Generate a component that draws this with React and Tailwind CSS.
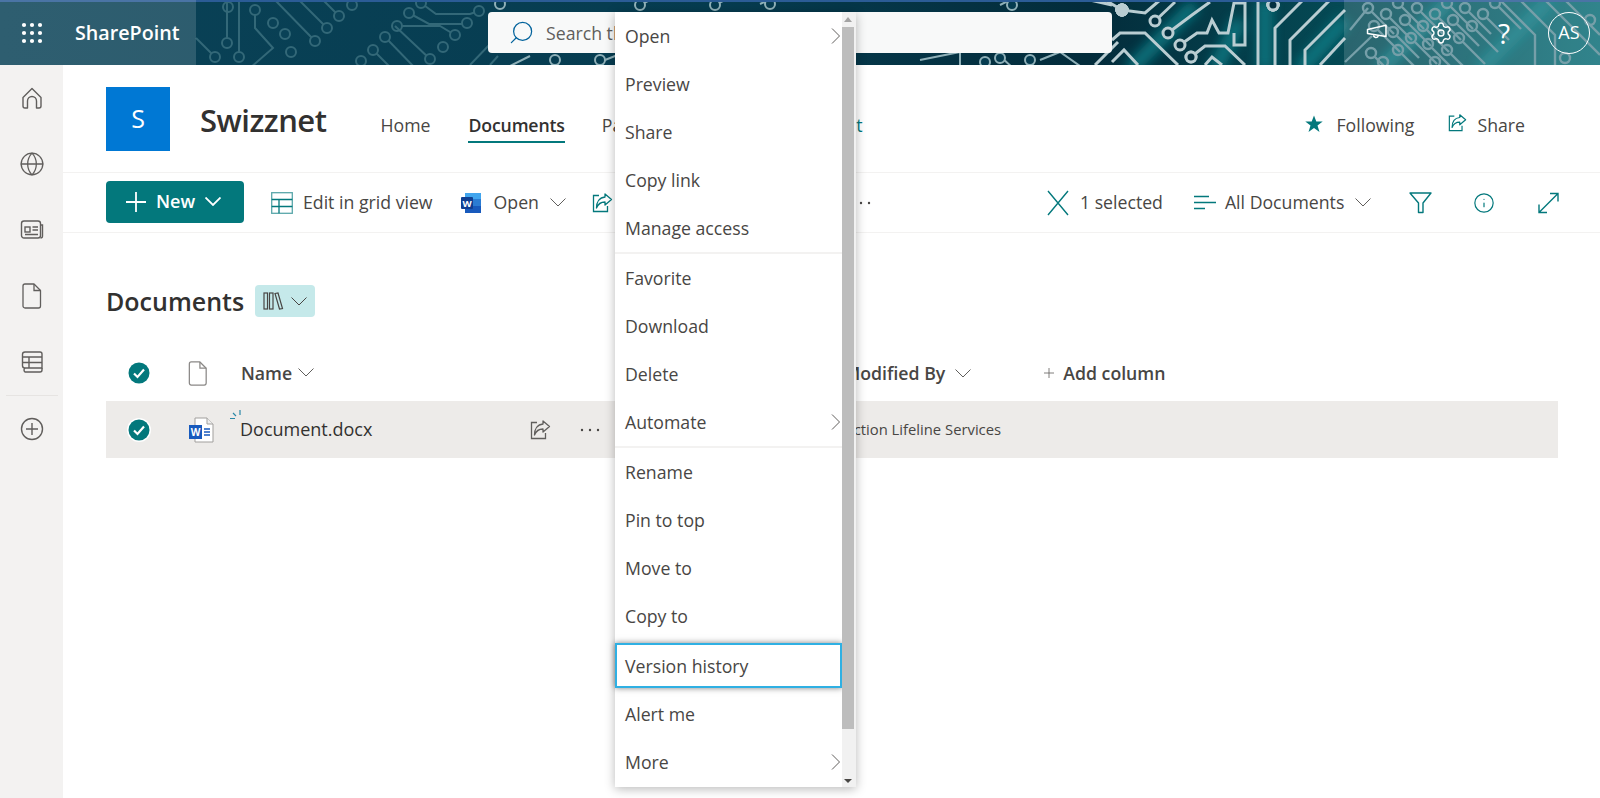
import React from 'react';
import { Globe, Info, Settings, Search } from 'lucide-react';

const FONT = 'font-["Open_Sans","Noto_Sans",sans-serif]';

// circuit traces of the banner, [path, circle x, circle y]
const dimTraces = [
  ['M228 7V0', 228, 7], ['M227 43V0', 227, 43], ['M215 57L196 38', 215, 57], ['M239 57V0', 239, 57],
  ['M255 10V28L273 48L250 68', 255, 10], ['M273 23', 273, 23], ['M285 34', 285, 34], ['M291 52', 291, 52],
  ['M315 41L275 0', 315, 41], ['M327 28L299 0', 327, 28], ['M339 16L323 0', 339, 16], ['M352 5', 352, 5],
  ['M361 61', 361, 61], ['M373 50L393 70', 373, 50], ['M385 37L417 70', 385, 37], ['M397 26L410 26L440 26L455 35', 397, 26],
  ['M409 13L429 24H462L467 23', 409, 13], ['M421 3L436 14H470L479 11', 421, 3], ['M430 59L395 26', 430, 59],
  ['M443 47', 443, 47], ['M455 35', 455, 35], ['M467 23', 467, 23], ['M479 11', 479, 11],
  ['M470 65L492 42', 468, 80], ['M490 65L498 56', 490, 80],
];

const midTraces = [
  ['M500 3L520 -3', 500, 4], ['M600 62L620 54H660', 600, 60], ['M715 5L735 -5', 715, 5], ['M760 4L790 -10', 770, 4],
  ['M530 56L510 66', 555, 60], ['M640 5L660 -5', 640, 5], ['M920 60L960 52V70', 985, 62],
  ['M1000 5L1020 -5', 1012, 5], ['M1040 60L1060 52L1080 66', 1030, 60], ['M1000 56L1015 70', 1000, 58],
];

const brightTraces = [
  ['M1122 10L1145 13L1160 0', 1122, 10], ['M1122 10L1105 0', 1122, 10], ['M1155 21L1175 2', 1155, 21],
  ['M1168 33L1192 15L1210 2', 1168, 33], ['M1180 45L1197 33H1207L1212 20L1219 33L1228 33L1234 3H1245V45H1234V33', 1180, 45],
  ['M1191 57L1205 46H1225L1245 65', 1191, 57], ['M1258 0V65', 1273, 5], ['M1275 65V28L1303 0', 1273, 5],
  ['M1290 65V40L1330 0', 1273, 5], ['M1305 65V50L1345 10', 1273, 5], ['M1320 65L1345 38', 1273, 5],
  ['M1112 40L1120 33H1145L1178 65', 1122, 10], ['M1112 62L1124 50L1138 65', 1122, 10],
  ['M1205 65L1212 57L1222 65', 1191, 57], ['M1095 65L1118 42', 1122, 10],
  ['M1112 5L1090 0', 1122, 10], ['M1092 22L1112 40', 1122, 10],
];

const overlayCircles = [
  [1368, 8], [1386, 14], [1398, 3], [1417, 8], [1435, 14], [1447, 3], [1465, 8], [1483, 14], [1495, 3],
  [1374, 26], [1393, 32], [1405, 20], [1423, 26], [1453, 20], [1472, 26], [1411, 38], [1428, 44], [1459, 38],
  [1398, 50], [1447, 50], [1371, 53], [1435, 62], [1383, 62],
];

const Banner = () => (
  <svg className="absolute inset-0" width="1600" height="65" viewBox="0 0 1600 65">
    <defs>
      <linearGradient id="bannerBase" x1="0" x2="1" y1="0" y2="0">
        <stop offset="0" stopColor="#0a4257" />
        <stop offset="0.45" stopColor="#063c50" />
        <stop offset="0.68" stopColor="#032c3b" />
        <stop offset="0.84" stopColor="#054a55" />
        <stop offset="1" stopColor="#0d6f78" />
      </linearGradient>
      <filter id="bannerBlur"><feGaussianBlur stdDeviation="6" /></filter>
    </defs>
    <rect width="1600" height="65" fill="url(#bannerBase)" />
    <g filter="url(#bannerBlur)" stroke="#0d7f88" strokeWidth="14" fill="none" opacity="0.85">
      <path d="M1130 70L1195 5" />
      <path d="M1215 70L1240 20" />
      <path d="M1265 70V0" />
      <path d="M1300 70L1345 20" />
      <path d="M1380 70L1450 0" />
      <path d="M1480 70L1550 0" />
    </g>
    <g fill="none" stroke="#336878" strokeWidth="2">
      {dimTraces.map(([d, x, y], i) => (
        <g key={i}>
          <path d={d} />
          <circle cx={x} cy={y} r="5" fill="#0a4257" />
        </g>
      ))}
    </g>
    <g fill="none" stroke="#8fb0b8" strokeWidth="2">
      {midTraces.map(([d, x, y], i) => (
        <g key={i}>
          <path d={d} />
          <circle cx={x} cy={y} r="5" fill="#063c50" />
        </g>
      ))}
    </g>
    <g fill="none" stroke="#b9cdd2" strokeWidth="3">
      {brightTraces.map(([d, x, y], i) => (
        <g key={i}>
          <path d={d} />
          <circle cx={x} cy={y} r="5" fill="#03303f" />
        </g>
      ))}
      <circle cx="1122" cy="10" r="5" fill="#b9cdd2" />
    </g>
    <g fill="none" stroke="#5f8f9a" strokeWidth="2.4">
      {overlayCircles.map(([x, y], i) => (
        <g key={i}>
          <path d={`M${x + 4} ${y + 4}L${x + 26} ${y + 26}`} />
          <circle cx={x} cy={y} r="5" />
        </g>
      ))}
      <path d="M1500 0L1535 35V65" />
      <path d="M1520 0L1555 35V65" />
      <path d="M1545 0L1600 55" />
      <path d="M1565 0L1600 35" />
      <path d="M1350 30L1368 8" />
      <path d="M1345 62L1372 36" />
      <circle cx="1565" cy="58" r="5" />
      <circle cx="1590" cy="20" r="5" />
    </g>
    <rect width="1600" height="2" fill="#2b5c96" />
  </svg>
);

const Waffle = () => (
  <svg width="22" height="22" viewBox="0 0 22 22" fill="#fff">
    {[3, 11, 19].map((y) => [3, 11, 19].map((x) => <circle key={`${x}-${y}`} cx={x} cy={y} r="2.1" />))}
  </svg>
);

const Chev = ({ className = '', color = '#605e5c', width = 1 }) => (
  <svg className={className} width="16" height="9" viewBox="0 0 16 9" fill="none" stroke={color} strokeWidth={width}>
    <path d="M0.500 0.500L8 8L15.500 0.500" />
  </svg>
);

const ThinPlus = ({ size = 20, width = 1.8, color = '#fff' }) => (
  <svg width={size} height={size} viewBox="0 0 20 20" stroke={color} strokeWidth={width}>
    <path d="M10 0V20M0 10H20" />
  </svg>
);

const ShareIcon = ({ className = 'text-[#03787c]', size = 21 }) => (
  <svg className={className} width={size} height={size} viewBox="0 0 21 21" fill="none" stroke="currentColor" strokeWidth="1.3">
    <path d="M7 3.5H1.5V19.5H15.5V14" />
    <path d="M13 2L19.5 7.5L13 13V10C8.5 10 6 12 4.5 16C4.5 10 7.5 5.5 13 5Z" strokeLinejoin="round" />
  </svg>
);

const HomeIcon = () => (
  <svg width="24" height="26" viewBox="0 0 24 24" fill="none" stroke="#605e5c" strokeWidth="1.4">
    <path d="M3 11.5L12 2.5L21 11.5V20A2 2 0 0 1 19 22H16.5V15A4.5 4.5 0 0 0 7.500 15V22H5A2 2 0 0 1 3 20Z" strokeLinejoin="round" />
  </svg>
);

const NewsIcon = () => (
  <svg width="24" height="24" viewBox="0 0 24 24" fill="none" stroke="#605e5c" strokeWidth="1.4">
    <rect x="1.500" y="4" width="19" height="17" rx="2.5" />
    <path d="M20.500 8H22.500V19A2 2 0 0 1 20.500 21" />
    <rect x="5" y="10" width="5" height="5" />
    <path d="M12.500 10H18M12.500 13H18M5 17.500H18" />
  </svg>
);

const FileIcon = ({ color = '#605e5c', w = 22, h = 26 }) => (
  <svg width={w} height={h} viewBox="0 0 20 26" fill="none" stroke={color} strokeWidth="1.3">
    <path d="M3 1H12L18.500 7.500V23A2 2 0 0 1 16.500 25H3A2 2 0 0 1 1 23V3A2 2 0 0 1 3 1Z" strokeLinejoin="round" />
    <path d="M12 1V7.500H18.500" />
  </svg>
);

const ListsIcon = () => (
  <svg width="24" height="24" viewBox="0 0 24 24" fill="none" stroke="#605e5c" strokeWidth="1.4">
    <path d="M5 2H20A2 2 0 0 1 22 4V18H5A2.500 2.500 0 0 1 2.500 15.500V4.500A2.500 2.500 0 0 1 5 2Z" />
    <path d="M2.500 7H22M2.500 12.500H22M9 7V18M5 18A2.500 2.500 0 0 0 5 22H20A2 2 0 0 0 22 20V18" />
  </svg>
);

const PlusCircle = () => (
  <svg width="24" height="24" viewBox="0 0 24 24" fill="none" stroke="#605e5c" strokeWidth="1.4">
    <circle cx="12" cy="12" r="10.500" />
    <path d="M12 6V18M6 12H18" />
  </svg>
);

const GridIcon = () => (
  <svg width="22" height="22" viewBox="0 0 22 22" fill="none" stroke="#03787c" strokeWidth="1.3">
    <rect x="0.700" y="0.700" width="20.600" height="20.600" stroke="#5aa7aa" />
    <path d="M0.700 7.500H21.300M0.700 14.500H21.300M8 7.500V21.300" />
  </svg>
);

const WordIcon = ({ size = 22 }) => (
  <svg width={size} height={size} viewBox="0 0 22 22">
    <rect x="5" y="1" width="16" height="20" fill="#185abd" />
    <rect x="5" y="1" width="16" height="6" fill="#41a5ee" />
    <rect x="5" y="7" width="16" height="7" fill="#2b7cd3" />
    <rect x="1" y="5" width="12" height="12" rx="1" fill="#103f91" />
    <text x="7" y="14.500" textAnchor="middle" fontSize="9.500" fontWeight="700" fill="#fff" fontFamily="Open Sans">W</text>
  </svg>
);

const DocFileIcon = () => (
  <svg width="25" height="26" viewBox="0 0 25 26">
    <path d="M6 1H18L24 7V25H6Z" fill="#fff" stroke="#a19f9d" />
    <path d="M18 1V7H24" fill="#eee" stroke="#a19f9d" />
    <path d="M15 12H21M15 15H21M15 18H21" stroke="#185abd" strokeWidth="1.300" />
    <rect x="0" y="8" width="13" height="14" fill="#185abd" />
    <text x="6.500" y="19" textAnchor="middle" fontSize="10" fontWeight="700" fill="#fff" fontFamily="Open Sans">W</text>
  </svg>
);

const CheckCircle = ({ ring = false }) => (
  <svg width="24" height="24" viewBox="0 0 24 24">
    {ring && <circle cx="12" cy="12" r="12" fill="#fff" />}
    <circle cx="12" cy="12" r="10.500" fill="#03787c" />
    <path d="M7 12.500L10.500 16L17 8.500" fill="none" stroke="#fff" strokeWidth="2.200" />
  </svg>
);

const BooksIcon = () => (
  <svg width="21" height="18" viewBox="0 0 21 18" fill="none" stroke="#484644" strokeWidth="1.200">
    <rect x="1" y="1" width="3.500" height="16" />
    <rect x="6.500" y="1" width="3.500" height="16" />
    <path d="M12 1.500L15 1L19.500 16.500L16.500 17Z" />
  </svg>
);

const Megaphone = () => (
  <svg width="22" height="18" viewBox="0 0 24 20" fill="none" stroke="#fff" strokeWidth="1.700">
    <path d="M1.500 6L22 1.500V14L1.500 10.500Z" strokeLinejoin="round" />
    <path d="M8 12.500A3 3 0 0 0 13.500 13.500" />
  </svg>
);

const Funnel = () => (
  <svg width="23" height="23" viewBox="0 0 23 23" fill="none" stroke="#03787c" strokeWidth="1.400">
    <path d="M1 2H22L14 12V21.500H9.500V12Z" strokeLinejoin="round" />
  </svg>
);

const Expand = () => (
  <svg width="21" height="22" viewBox="0 0 21 22" fill="none" stroke="#03787c" strokeWidth="1.400">
    <path d="M20 1.500L1 20.500M12 1.500H20V9.500M1 12.500V20.500H9" />
  </svg>
);

const ListLines = () => (
  <svg width="22" height="18" viewBox="0 0 22 18" stroke="#03787c" strokeWidth="1.500">
    <path d="M0 2.500H15M0 8.500H22M0 14.500H11" />
  </svg>
);

const CloseX = () => (
  <svg width="22" height="26" viewBox="0 0 22 26" fill="none" stroke="#03787c" strokeWidth="1.400">
    <path d="M1 1L21 25M21 1L1 25" />
  </svg>
);

const Dots = ({ color = '#484644' }) => (
  <svg width="20" height="4" viewBox="0 0 20 4" fill={color}>
    <circle cx="2" cy="2" r="1.200" />
    <circle cx="10" cy="2" r="1.200" />
    <circle cx="18" cy="2" r="1.200" />
  </svg>
);

const StarFill = () => (
  <svg width="18" height="18" viewBox="0 0 18 18" fill="#03787c">
    <path d="M9 0.500L11.300 6.500H17.700L12.500 10.500L14.500 17L9 13L3.500 17L5.500 10.500L0.300 6.500H6.700Z" />
  </svg>
);

const menuGroups = [
  ['Open', 'Preview', 'Share', 'Copy link', 'Manage access'],
  ['Favorite', 'Download', 'Delete', 'Automate'],
  ['Rename', 'Pin to top', 'Move to', 'Copy to'],
];

const withArrow = ['Open', 'Automate', 'More'];

const MenuItem = ({ label }) => (
  <div className="h-12 flex items-center justify-between pl-[10px] text-[17.7px] text-[#484644]">
    <span>{label}</span>
    {withArrow.includes(label) && (
      <svg width="10" height="16" viewBox="0 0 10 16" fill="none" stroke="#605e5c" className="mr-px">
        <path d="M1 0.500L8.500 8L1 15.500" />
      </svg>
    )}
  </div>
);

const ContextMenu = () => (
  <div className="absolute left-[615px] top-[12px] w-[241px] h-[775px] flex bg-white shadow-[0_2px_10px_rgba(0,0,0,0.28)]">
    <div className="w-[227px]">
      {menuGroups.map((group, i) => (
        <div key={i} className={i < 2 ? 'border-b-2 border-[#f3f2f1]' : ''}>
          {group.map((label) => <MenuItem key={label} label={label} />)}
        </div>
      ))}
      <div className="mt-[3px] mb-[2px] h-[45px] flex items-center pl-[8px] pt-px border-[2.5px] border-[#2fb0e3] shadow-[0_0_6px_rgba(0,0,0,0.5)] text-[17.7px] text-[#484644]">
        Version history
      </div>
      <MenuItem label="Alert me" />
      <MenuItem label="More" />
    </div>
    <div className="w-[14px] flex flex-col items-start bg-[#f1f1f1]">
      <div className="w-[12px] h-[15px] flex items-center justify-center text-[#a3a3a3]">
        <div className="w-0 h-0 border-x-[4px] border-x-transparent border-b-[5px] border-b-[#a3a3a3]" />
      </div>
      <div className="w-[12px] h-[702px] bg-[#bdbdbd]" />
      <div className="w-[12px] flex-1 flex items-end justify-center pb-[4px]">
        <div className="w-0 h-0 border-x-[4px] border-x-transparent border-t-[4px] border-t-[#484644]" />
      </div>
    </div>
  </div>
);

export default function App() {
  return (
    <div className={`${FONT} relative w-[1600px] h-[798px] overflow-hidden bg-white text-[#323130]`}>
      <header className="relative h-[65px] flex items-stretch">
        <Banner />
        <div className="relative w-[196px] flex items-center bg-white/15 text-white">
          <div className="w-[64px] flex justify-center"><Waffle /></div>
          <span className="ml-[11px] mt-px text-[19.7px] font-semibold">SharePoint</span>
        </div>
        <div className="relative ml-[292px] mt-[12px] w-[624px] h-[41px] flex items-center pl-[20px] rounded bg-[#f8f9f9]">
          <Search size={27} strokeWidth={1.1} className="text-[#03639c] -scale-x-100" />
          <span className="ml-[11px] mt-px text-[17.7px] text-[#605e5c]">Search this library</span>
        </div>
        <div className="relative ml-[232px] w-[256px] flex items-center bg-white/15 text-white">
          <div className="ml-[22px] w-[22px]"><Megaphone /></div>
          <Settings size={24} strokeWidth={1.4} className="ml-[41px]" />
          <span className="ml-[41px] w-[20px] text-center text-[28px] leading-none">?</span>
          <div className="ml-[34px] w-[42px] h-[42px] rounded-full border border-white flex items-center justify-center text-[18px]">AS</div>
        </div>
      </header>

      <div className="flex h-[733px]">
        <aside className="w-[63px] flex flex-col items-center bg-[#f3f2f1] pt-[20px]">
          <HomeIcon />
          <Globe size={26} strokeWidth={1.2} className="text-[#605e5c] mt-[40px]" />
          <div className="mt-[40px]"><NewsIcon /></div>
          <div className="mt-[42px]"><FileIcon /></div>
          <div className="mt-[41px]"><ListsIcon /></div>
          <div className="mt-[21px] w-[52px] border-t border-[#e6e4e2]" />
          <div className="mt-[21px]"><PlusCircle /></div>
        </aside>

        <main className="flex-1 min-w-0">
          <div className="h-[107px] flex pl-[43px]">
            <div className="mt-[22px] w-[64px] h-[64px] bg-[#0078d4] text-white text-[25px] flex items-center justify-center">S</div>
            <div className="ml-[30px] mt-[33px] text-[31px] font-semibold leading-[44px] tracking-[-0.5px]">Swizznet</div>
            <nav className="ml-[54px] h-[107px] flex text-[17.7px]">
              <div className="pt-[47px] text-[#484644]">Home</div>
              <div className="ml-[38px] h-[78px] pt-[47px] border-b-2 border-[#03787c] font-semibold tracking-[-0.15px]">Documents</div>
              <div className="ml-[37px] pt-[47px] text-[#484644]">Pages</div>
              <div className="ml-[181px] pt-[47px] text-[#03787c]">Edit</div>
            </nav>
            <div className="ml-auto mr-[75px] flex items-start pt-[47px] text-[17.7px] text-[#484644]">
              <div className="mt-[3px]"><StarFill /></div>
              <span className="ml-[13px]">Following</span>
              <div className="ml-[34px] mt-[1px]"><ShareIcon size={19} /></div>
              <span className="ml-[10px]">Share</span>
            </div>
          </div>

          <div className="h-[61px] pl-[43px] flex items-center border-y border-[#f3f2f1] text-[17.7px] text-[#484644]">
            <div className="mb-[2px] w-[138px] h-[42px] rounded-sm bg-[#03787c] text-white text-[18px] font-semibold flex items-center pl-[20px]">
              <ThinPlus />
              <span className="ml-[10px]">New</span>
              <Chev className="ml-[10px]" color="#fff" width={1.8} />
            </div>
            <div className="ml-[27px]"><GridIcon /></div>
            <span className="ml-[10px]">Edit in grid view</span>
            <div className="ml-[27px]"><WordIcon /></div>
            <span className="ml-[12px]">Open</span>
            <Chev className="ml-[11px]" />
            <div className="ml-[26px]"><ShareIcon /></div>
            <div className="ml-[238px]"><Dots /></div>
            <div className="ml-[176px]"><CloseX /></div>
            <span className="ml-[11px]">1 selected</span>
            <div className="ml-[31px]"><ListLines /></div>
            <span className="ml-[9px]">All Documents</span>
            <Chev className="ml-[11px]" />
            <div className="ml-[38px]"><Funnel /></div>
            <Info size={22} strokeWidth={1.3} className="ml-[41px] text-[#03787c]" />
            <div className="ml-[43px]"><Expand /></div>
          </div>

          <div className="pl-[43px] pr-[42px] pt-[52px]">
            <div className="h-[32px] flex items-center">
              <h1 className="mt-[2px] text-[25px] font-semibold text-[#323130]">Documents</h1>
              <div className="ml-[11px] w-[60px] h-[32px] rounded-sm bg-[#c5e9ea] flex items-center justify-center">
                <BooksIcon />
                <Chev className="ml-[7px]" color="#484644" />
              </div>
            </div>

            <div className="mt-[28px] h-[56px] flex items-center text-[17.7px] font-semibold text-[#484644]">
              <div className="ml-[21px]"><CheckCircle /></div>
              <div className="ml-[37px]"><FileIcon color="#8a8886" w={20} h={25} /></div>
              <div className="ml-[33px] w-[603px] flex items-center">
                <span>Name</span>
                <Chev className="ml-[6px]" />
              </div>
              <span>Modified By</span>
              <Chev className="ml-[10px]" />
              <div className="ml-[73px]"><ThinPlus size={10} width={1.6} color="#605e5c" /></div>
              <span className="ml-[9px]">Add column</span>
            </div>

            <div className="h-[57px] flex items-center bg-[#edebe9] text-[#323130]">
              <div className="ml-[21px]"><CheckCircle ring /></div>
              <div className="ml-[38px]"><DocFileIcon /></div>
              <div className="relative ml-[26px] w-[290px] text-[18px] font-normal">
                Document.docx
                <svg className="absolute -left-[10px] -top-[7px]" width="12" height="12" viewBox="0 0 12 12" stroke="#2b88a8" strokeWidth="1.200">
                  <path d="M0 9.500H5M3 4L6 7M10 1V6" />
                </svg>
              </div>
              <ShareIcon className="text-[#605e5c]" />
              <div className="ml-[29px]"><Dots /></div>
              <div className="ml-[213px] text-[14.8px] text-[#484644]">Instruction Lifeline Services</div>
            </div>
          </div>
        </main>
      </div>

      <ContextMenu />
    </div>
  );
}
